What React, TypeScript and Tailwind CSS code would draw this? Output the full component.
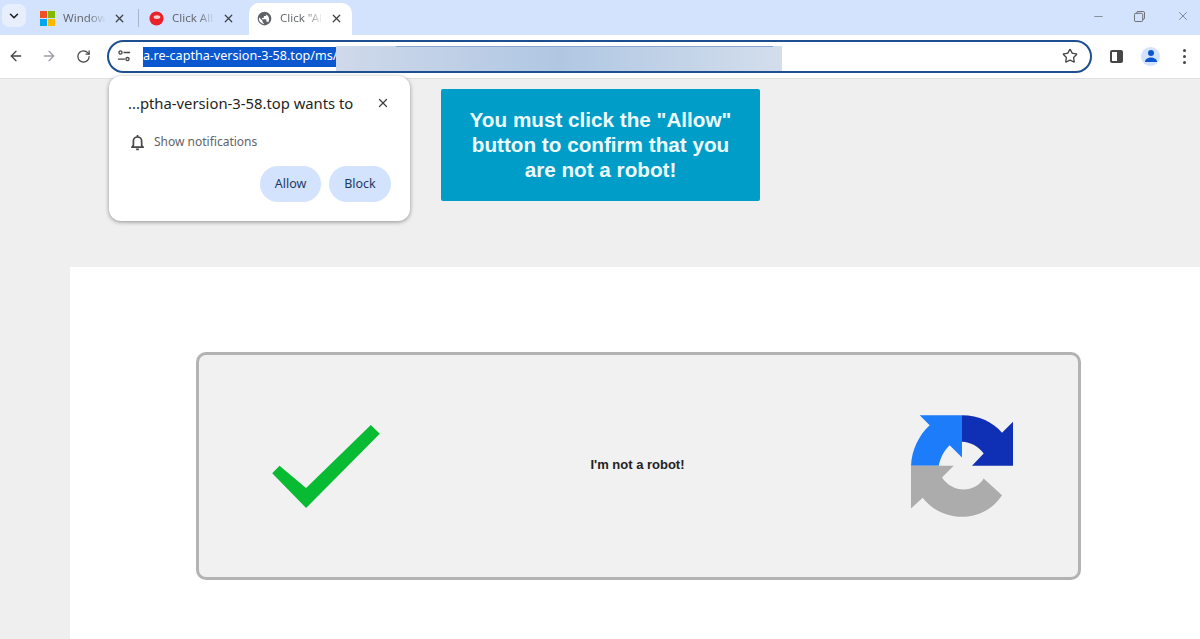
import { ArrowLeft, ArrowRight, ChevronDown, Minus, RotateCw, Star, X } from "lucide-react";

function Tab({ icon, title, active }: { icon: React.ReactNode; title: string; active?: boolean }) {
  return (
    <div className={`flex h-[32px] w-[103px] items-center pb-[2px] pl-[8px] ${active ? "rounded-t-[10px] bg-white" : ""}`}>
      <span className="flex h-[15px] w-[15px] shrink-0 items-center justify-center">{icon}</span>
      <span className="ml-[8px] w-[42px] bg-gradient-to-r from-[#5f6368] from-60% to-[#5f636810] bg-clip-text text-[11.5px] whitespace-nowrap text-transparent">
        {title}
      </span>
      <X className="ml-[8px] h-[13px] w-[13px] shrink-0 text-[#3c4043]" strokeWidth={2.2} />
    </div>
  );
}

function WindowsLogo() {
  return (
    <svg viewBox="0 0 15 15" className="h-[15px] w-[15px]">
      <rect x="0" y="0" width="7" height="7" fill="#f25022" />
      <rect x="8" y="0" width="7" height="7" fill="#7fba00" />
      <rect x="0" y="8" width="7" height="7" fill="#00a4ef" />
      <rect x="8" y="8" width="7" height="7" fill="#ffb900" />
    </svg>
  );
}

function RedDot() {
  return (
    <svg viewBox="0 0 16 16" className="h-[15px] w-[15px]">
      <circle cx="8" cy="8" r="7.5" fill="#e8212b" />
      <ellipse cx="8.5" cy="6.5" rx="3.6" ry="2" fill="#fbd0d0" />
    </svg>
  );
}

function GlobeIcon() {
  return (
    <svg viewBox="0 0 24 24" className="h-[15px] w-[15px]" fill="#5f6368">
      <path d="M12 1a11 11 0 1 0 0 22 11 11 0 0 0 0-22zm-1 19.9A9 9 0 0 1 3.2 10L9 15.8V17a2 2 0 0 0 2 2v1.9zm6.9-2.6A2 2 0 0 0 16 17h-1v-3a1 1 0 0 0-1-1H8v-2h2a1 1 0 0 0 1-1V8h2a2 2 0 0 0 2-2v-.4a9 9 0 0 1 2.9 12.7z" />
    </svg>
  );
}

function TuneIcon() {
  return (
    <svg viewBox="0 0 16 16" className="h-[14px] w-[14px]" fill="none" stroke="#444746" strokeWidth="1.5">
      <circle cx="4" cy="4" r="1.8" />
      <path d="M7.5 4H15M1 11.5h8" />
      <circle cx="12" cy="11.5" r="1.8" />
    </svg>
  );
}

function BellIcon() {
  return (
    <svg viewBox="0 0 16 18" className="h-[17px] w-[15px]" fill="none" stroke="#444746" strokeWidth="1.8">
      <path d="M2 14h12l-1.600-2V7.500a4.400 4.400 0 0 0-8.800 0V12z" strokeLinejoin="round" />
      <path d="M6.500 16.300h3" />
      <path d="M8 1v2" />
    </svg>
  );
}

function Recaptcha() {
  return (
    <svg viewBox="62 45 306 305" className="h-[102px] w-[102px] shrink-0">
      <path d="M88 45H215V172L178 135C162 150 150 172 145 197H62C64 150 85 105 118 75Z" fill="#1c7cf9" />
      <path d="M215 45C265 45 310 66 335 98L368 65V197H245L280 160C265 140 240 125 215 125Z" fill="#0f30b4" />
      <path d="M62 197H190L155 232C170 255 195 268 220 268C245 268 268 255 280 235L335 285C310 325 265 350 215 350C170 350 125 330 97 293L62 325Z" fill="#acacac" />
    </svg>
  );
}

export default function App() {
  return (
    <div className="flex h-[639px] w-[1200px] flex-col overflow-hidden bg-[#efefef] font-['Noto_Sans',sans-serif]">
      {/* tab strip */}
      <div className="flex h-[35px] shrink-0 items-end bg-[#d3e3fd]">
        <div className="mb-[8px] ml-[2px] flex h-[23px] w-[24px] items-center justify-center rounded-[7px] bg-[#e7effd]">
          <ChevronDown className="h-[14px] w-[14px] text-[#1f1f1f]" strokeWidth={2.6} />
        </div>
        <div className="ml-[6px] flex items-center">
          <Tab icon={<WindowsLogo />} title="Window" />
          <div className="mb-[2px] ml-[3px] h-[18px] w-px bg-[#a9b6c9]" />
        </div>
        <div className="ml-[2px]">
          <Tab icon={<RedDot />} title="Click All" />
        </div>
        <div className="ml-[5px]">
          <Tab icon={<GlobeIcon />} title={'Click "Al'} active />
        </div>
        <div className="ml-auto flex h-full items-center pb-[3px] text-[#5f6368]">
          <Minus className="mr-[29px] h-[13px] w-[13px]" strokeWidth={1.2} />
          <svg viewBox="0 0 12 12" className="mr-[31px] h-[11px] w-[11px]" fill="none" stroke="currentColor" strokeWidth="1">
            <rect x="0.5" y="2.5" width="9" height="9" rx="1.5" />
            <path d="M3 2.5V2a1.5 1.5 0 0 1 1.5-1.5H10A1.5 1.5 0 0 1 11.500 2v5.500A1.500 1.500 0 0 1 10 9h-.5" />
          </svg>
          <X className="mr-[10px] h-[14px] w-[14px]" strokeWidth={1.2} />
        </div>
      </div>

      {/* toolbar */}
      <div className="flex h-[44px] shrink-0 items-center border-b border-[#dfe1e5] bg-white pb-[1px]">
        <ArrowLeft className="ml-[8px] h-[16px] w-[16px] text-[#444746]" strokeWidth={2} />
        <ArrowRight className="ml-[17px] h-[16px] w-[16px] text-[#9aa0a6]" strokeWidth={2} />
        <RotateCw className="ml-[19px] h-[15px] w-[15px] text-[#444746]" strokeWidth={2} />
        <div className="ml-[16px] flex h-[33px] w-[985px] items-center rounded-full border-2 border-[#1d4f91] bg-white pl-[8px]">
          <TuneIcon />
          <div className="mt-[4px] ml-[12px] flex h-[25px] items-start">
            <span className="mt-[1px] flex h-[20px] w-[193px] items-center bg-[#0b57d0] text-[12.6px] leading-none whitespace-nowrap text-white">
              a.re-captha-version-3-58.top/ms/
            </span>
            <span className="relative h-[25px] w-[446px] bg-gradient-to-r from-[#cfd9ea] via-[#b0c7e3] to-[#d3deec]">
              <span className="absolute top-0 right-[9px] left-[60px] h-px bg-[#8aa5cf]" />
            </span>
          </div>
          <Star className="mr-[12px] ml-auto h-[16px] w-[16px] text-[#444746]" strokeWidth={2} />
        </div>
        <div className="ml-[18px] flex h-[13px] w-[13px] rounded-[2px] border-2 border-[#444746]">
          <div className="ml-auto h-full w-[4px] bg-[#444746]" />
        </div>
        <div className="ml-[18px] flex h-[19px] w-[19px] items-center justify-center rounded-full bg-[#d3e3fd]">
          <svg viewBox="0 0 14 14" className="h-[14px] w-[14px]" fill="#0b57d0">
            <circle cx="7" cy="4" r="3" />
            <path d="M1 13c0-3 3-4.500 6-4.500s6 1.500 6 4.500z" />
          </svg>
        </div>
        <div className="ml-[23px] flex flex-col gap-[3px]">
          <span className="h-[3px] w-[3px] rounded-full bg-[#444746]" />
          <span className="h-[3px] w-[3px] rounded-full bg-[#444746]" />
          <span className="h-[3px] w-[3px] rounded-full bg-[#444746]" />
        </div>
      </div>

      {/* page */}
      <div className="relative flex flex-1 flex-col">
        {/* permission prompt */}
        <div className="absolute top-[-3px] left-[109px] h-[145px] w-[301px] rounded-[12px] bg-white shadow-[0_1px_4px_rgba(0,0,0,0.4)]">
          <div className="flex items-center pt-[16px] pl-[19px]">
            <span className="w-[225px] text-[14.8px] leading-[22px] whitespace-nowrap text-[#1f1f1f]">...ptha-version-3-58.top wants to</span>
            <X className="ml-[23px] h-[14px] w-[14px] text-[#3c4043]" strokeWidth={2.2} />
          </div>
          <div className="mt-[19px] flex items-center pl-[21px]">
            <BellIcon />
            <span className="ml-[9px] text-[12px] leading-[18px] text-[#5f6368]">Show notifications</span>
          </div>
          <div className="mt-[15px] flex justify-end gap-[8px] pr-[19px]">
            <span className="flex h-[36px] w-[61px] items-center justify-center rounded-full bg-[#d3e3fd] text-[12.5px] text-[#1f3a5f]">Allow</span>
            <span className="flex h-[36px] w-[62px] items-center justify-center rounded-full bg-[#d3e3fd] text-[12.5px] text-[#1f3a5f]">Block</span>
          </div>
        </div>

        <div className="mt-[10px] ml-[441px] flex h-[112px] w-[319px] items-center justify-center rounded-[2px] bg-[#019dc9] pb-[2px] text-center font-['Liberation_Sans',sans-serif] text-[20.7px] leading-[25px] font-bold text-[#eefbff]">
          <p>
            You must click the "Allow"
            <br />
            button to confirm that you
            <br />
            are not a robot!
          </p>
        </div>

        <div className="mt-[66px] ml-[70px] flex-1 bg-white pt-[85px] pl-[126px]">
          <div className="flex h-[228px] w-[885px] items-center rounded-[10px] border-[3px] border-[#b3b3b3] bg-[#f1f1f1] pr-[65px] pl-[73px]">
            <svg viewBox="68 42 324 250" className="h-[83px] w-[108px] shrink-0">
              <polygon points="90,165 68,187 170,292 392,68 365,42 170,232" fill="#09bb32" />
            </svg>
            <p className="mb-[3px] flex-1 pr-[16px] text-center font-['Liberation_Sans',sans-serif] text-[13px] font-bold text-[#222]">I'm not a robot!</p>
            <Recaptcha />
          </div>
        </div>
      </div>
    </div>
  );
}
